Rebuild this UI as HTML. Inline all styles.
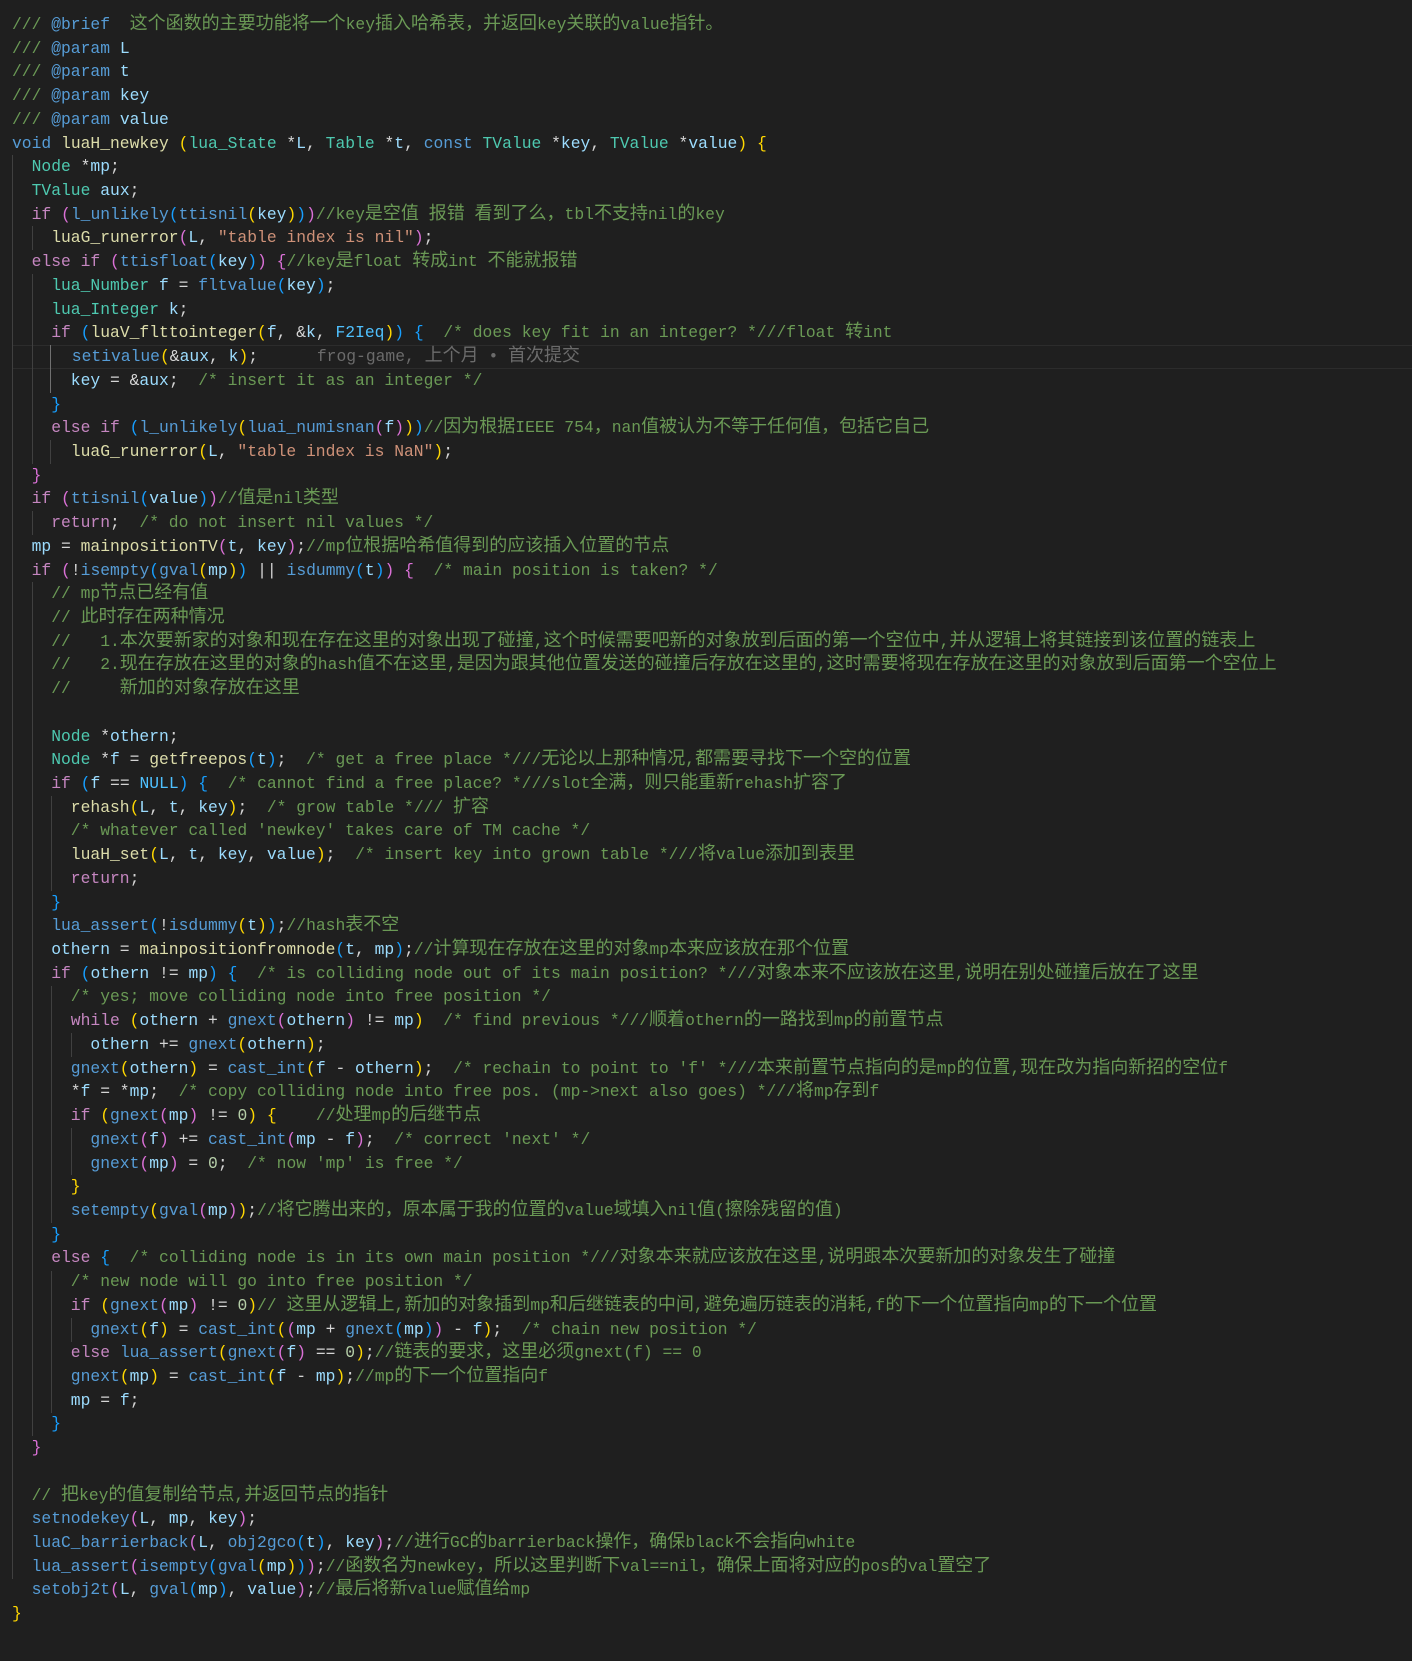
<!DOCTYPE html>
<html><head><meta charset="utf-8"><style>
html,body{margin:0;padding:0;background:#1f1f1f;width:1412px;height:1661px;overflow:hidden}
#ed{position:relative;padding-top:13px;padding-left:12px;font-family:"Liberation Mono",monospace;font-size:16.33px;color:#d4d4d4}
.l{height:23.73px;line-height:23.73px;white-space:pre;overflow:visible}
i{font-style:normal}
u{text-decoration:none;font-family:"Noto Sans CJK SC","WenQuanYi Zen Hei",sans-serif;font-size:18px;line-height:0;vertical-align:baseline}
.c{color:#6a9955}.k{color:#569cd6}.p{color:#c586c0}.f{color:#dcdcaa}.t{color:#4ec9b0}.v{color:#9cdcfe}.s{color:#ce9178}.n{color:#b5cea8}.m{color:#4fc1ff}
.g{color:#ffd700}.o{color:#da70d6}.b{color:#179fff}
.hl{border-top:1px solid #2c2c2c;border-bottom:1px solid #2c2c2c;margin-left:1px;padding-left:0;box-sizing:border-box;line-height:21.73px}
.bl{color:#6b6b6b}
.gd{position:absolute;width:1px;background:#404040}
</style></head><body><div id="ed">
<div class="gd" style="left:12px;top:155px;height:1424px"></div>
<div class="gd" style="left:32px;top:226px;height:24px"></div>
<div class="gd" style="left:32px;top:274px;height:190px"></div>
<div class="gd" style="left:32px;top:511px;height:24px"></div>
<div class="gd" style="left:32px;top:582px;height:854px"></div>
<div class="gd" style="left:50px;top:345px;height:48px;background:#707070"></div>
<div class="gd" style="left:50px;top:440px;height:24px"></div>
<div class="gd" style="left:51px;top:796px;height:95px"></div>
<div class="gd" style="left:51px;top:986px;height:237px"></div>
<div class="gd" style="left:51px;top:1271px;height:142px"></div>
<div class="gd" style="left:71px;top:1033px;height:24px"></div>
<div class="gd" style="left:71px;top:1128px;height:47px"></div>
<div class="gd" style="left:71px;top:1318px;height:24px"></div>

<div class="l"><i class="c">/// </i><i class="k">@brief</i><i class="c">  <u>这个函数的主要功能将一个</u>key<u>插入哈希表，并返回</u>key<u>关联的</u>value<u>指针。</u></i></div>
<div class="l"><i class="c">/// </i><i class="k">@param</i> <i class="v">L</i></div>
<div class="l"><i class="c">/// </i><i class="k">@param</i> <i class="v">t</i></div>
<div class="l"><i class="c">/// </i><i class="k">@param</i> <i class="v">key</i></div>
<div class="l"><i class="c">/// </i><i class="k">@param</i> <i class="v">value</i></div>
<div class="l"><i class="k">void</i> <i class="f">luaH_newkey</i> <i class="g">(</i><i class="t">lua_State</i> *<i class="v">L</i>, <i class="t">Table</i> *<i class="v">t</i>, <i class="k">const</i> <i class="t">TValue</i> *<i class="v">key</i>, <i class="t">TValue</i> *<i class="v">value</i><i class="g">)</i> <i class="g">{</i></div>
<div class="l">  <i class="t">Node</i> *<i class="v">mp</i>;</div>
<div class="l">  <i class="t">TValue</i> <i class="v">aux</i>;</div>
<div class="l">  <i class="p">if</i> <i class="o">(</i><i class="k">l_unlikely</i><i class="b">(</i><i class="k">ttisnil</i><i class="g">(</i><i class="v">key</i><i class="g">)</i><i class="b">)</i><i class="o">)</i><i class="c">//key<u>是空值</u> <u>报错</u> <u>看到了么，</u>tbl<u>不支持</u>nil<u>的</u>key</i></div>
<div class="l">    <i class="f">luaG_runerror</i><i class="o">(</i><i class="v">L</i>, <i class="s">"table index is nil"</i><i class="o">)</i>;</div>
<div class="l">  <i class="p">else if</i> <i class="o">(</i><i class="k">ttisfloat</i><i class="b">(</i><i class="v">key</i><i class="b">)</i><i class="o">)</i> <i class="o">{</i><i class="c">//key<u>是</u>float <u>转成</u>int <u>不能就报错</u></i></div>
<div class="l">    <i class="t">lua_Number</i> <i class="v">f</i> = <i class="k">fltvalue</i><i class="b">(</i><i class="v">key</i><i class="b">)</i>;</div>
<div class="l">    <i class="t">lua_Integer</i> <i class="v">k</i>;</div>
<div class="l">    <i class="p">if</i> <i class="b">(</i><i class="f">luaV_flttointeger</i><i class="g">(</i><i class="v">f</i>, &amp;<i class="v">k</i>, <i class="m">F2Ieq</i><i class="g">)</i><i class="b">)</i> <i class="b">{</i>  <i class="c">/* does key fit in an integer? *///float <u>转</u>int</i></div>
<div class="l hl">      <i class="k">setivalue</i><i class="g">(</i>&amp;<i class="v">aux</i>, <i class="v">k</i><i class="g">)</i>;      <i class="bl">frog-game, <u>上个月</u> • <u>首次提交</u></i></div>
<div class="l">      <i class="v">key</i> = &amp;<i class="v">aux</i>;  <i class="c">/* insert it as an integer */</i></div>
<div class="l">    <i class="b">}</i></div>
<div class="l">    <i class="p">else if</i> <i class="b">(</i><i class="k">l_unlikely</i><i class="g">(</i><i class="k">luai_numisnan</i><i class="o">(</i><i class="v">f</i><i class="o">)</i><i class="g">)</i><i class="b">)</i><i class="c">//<u>因为根据</u>IEEE 754<u>，</u>nan<u>值被认为不等于任何值，包括它自己</u></i></div>
<div class="l">      <i class="f">luaG_runerror</i><i class="g">(</i><i class="v">L</i>, <i class="s">"table index is NaN"</i><i class="g">)</i>;</div>
<div class="l">  <i class="o">}</i></div>
<div class="l">  <i class="p">if</i> <i class="o">(</i><i class="k">ttisnil</i><i class="b">(</i><i class="v">value</i><i class="b">)</i><i class="o">)</i><i class="c">//<u>值是</u>nil<u>类型</u></i></div>
<div class="l">    <i class="p">return</i>;  <i class="c">/* do not insert nil values */</i></div>
<div class="l">  <i class="v">mp</i> = <i class="f">mainpositionTV</i><i class="o">(</i><i class="v">t</i>, <i class="v">key</i><i class="o">)</i>;<i class="c">//mp<u>位根据哈希值得到的应该插入位置的节点</u></i></div>
<div class="l">  <i class="p">if</i> <i class="o">(</i>!<i class="k">isempty</i><i class="b">(</i><i class="k">gval</i><i class="g">(</i><i class="v">mp</i><i class="g">)</i><i class="b">)</i> || <i class="k">isdummy</i><i class="b">(</i><i class="v">t</i><i class="b">)</i><i class="o">)</i> <i class="o">{</i>  <i class="c">/* main position is taken? */</i></div>
<div class="l">    <i class="c">// mp<u>节点已经有值</u></i></div>
<div class="l">    <i class="c">// <u>此时存在两种情况</u></i></div>
<div class="l">    <i class="c">//   1.<u>本次要新家的对象和现在存在这里的对象出现了碰撞</u>,<u>这个时候需要吧新的对象放到后面的第一个空位中</u>,<u>并从逻辑上将其链接到该位置的链表上</u></i></div>
<div class="l">    <i class="c">//   2.<u>现在存放在这里的对象的</u>hash<u>值不在这里</u>,<u>是因为跟其他位置发送的碰撞后存放在这里的</u>,<u>这时需要将现在存放在这里的对象放到后面第一个空位上</u></i></div>
<div class="l">    <i class="c">//     <u>新加的对象存放在这里</u></i></div>
<div class="l"> </div>
<div class="l">    <i class="t">Node</i> *<i class="v">othern</i>;</div>
<div class="l">    <i class="t">Node</i> *<i class="v">f</i> = <i class="f">getfreepos</i><i class="b">(</i><i class="v">t</i><i class="b">)</i>;  <i class="c">/* get a free place *///<u>无论以上那种情况</u>,<u>都需要寻找下一个空的位置</u></i></div>
<div class="l">    <i class="p">if</i> <i class="b">(</i><i class="v">f</i> == <i class="m">NULL</i><i class="b">)</i> <i class="b">{</i>  <i class="c">/* cannot find a free place? *///slot<u>全满，则只能重新</u>rehash<u>扩容了</u></i></div>
<div class="l">      <i class="f">rehash</i><i class="g">(</i><i class="v">L</i>, <i class="v">t</i>, <i class="v">key</i><i class="g">)</i>;  <i class="c">/* grow table */// <u>扩容</u></i></div>
<div class="l">      <i class="c">/* whatever called 'newkey' takes care of TM cache */</i></div>
<div class="l">      <i class="f">luaH_set</i><i class="g">(</i><i class="v">L</i>, <i class="v">t</i>, <i class="v">key</i>, <i class="v">value</i><i class="g">)</i>;  <i class="c">/* insert key into grown table *///<u>将</u>value<u>添加到表里</u></i></div>
<div class="l">      <i class="p">return</i>;</div>
<div class="l">    <i class="b">}</i></div>
<div class="l">    <i class="k">lua_assert</i><i class="b">(</i>!<i class="k">isdummy</i><i class="g">(</i><i class="v">t</i><i class="g">)</i><i class="b">)</i>;<i class="c">//hash<u>表不空</u></i></div>
<div class="l">    <i class="v">othern</i> = <i class="f">mainpositionfromnode</i><i class="b">(</i><i class="v">t</i>, <i class="v">mp</i><i class="b">)</i>;<i class="c">//<u>计算现在存放在这里的对象</u>mp<u>本来应该放在那个位置</u></i></div>
<div class="l">    <i class="p">if</i> <i class="b">(</i><i class="v">othern</i> != <i class="v">mp</i><i class="b">)</i> <i class="b">{</i>  <i class="c">/* is colliding node out of its main position? *///<u>对象本来不应该放在这里</u>,<u>说明在别处碰撞后放在了这里</u></i></div>
<div class="l">      <i class="c">/* yes; move colliding node into free position */</i></div>
<div class="l">      <i class="p">while</i> <i class="g">(</i><i class="v">othern</i> + <i class="k">gnext</i><i class="o">(</i><i class="v">othern</i><i class="o">)</i> != <i class="v">mp</i><i class="g">)</i>  <i class="c">/* find previous *///<u>顺着</u>othern<u>的一路找到</u>mp<u>的前置节点</u></i></div>
<div class="l">        <i class="v">othern</i> += <i class="k">gnext</i><i class="g">(</i><i class="v">othern</i><i class="g">)</i>;</div>
<div class="l">      <i class="k">gnext</i><i class="g">(</i><i class="v">othern</i><i class="g">)</i> = <i class="k">cast_int</i><i class="g">(</i><i class="v">f</i> - <i class="v">othern</i><i class="g">)</i>;  <i class="c">/* rechain to point to 'f' *///<u>本来前置节点指向的是</u>mp<u>的位置</u>,<u>现在改为指向新招的空位</u>f</i></div>
<div class="l">      *<i class="v">f</i> = *<i class="v">mp</i>;  <i class="c">/* copy colliding node into free pos. (mp-&gt;next also goes) *///<u>将</u>mp<u>存到</u>f</i></div>
<div class="l">      <i class="p">if</i> <i class="g">(</i><i class="k">gnext</i><i class="o">(</i><i class="v">mp</i><i class="o">)</i> != <i class="n">0</i><i class="g">)</i> <i class="g">{</i>    <i class="c">//<u>处理</u>mp<u>的后继节点</u></i></div>
<div class="l">        <i class="k">gnext</i><i class="o">(</i><i class="v">f</i><i class="o">)</i> += <i class="k">cast_int</i><i class="o">(</i><i class="v">mp</i> - <i class="v">f</i><i class="o">)</i>;  <i class="c">/* correct 'next' */</i></div>
<div class="l">        <i class="k">gnext</i><i class="o">(</i><i class="v">mp</i><i class="o">)</i> = <i class="n">0</i>;  <i class="c">/* now 'mp' is free */</i></div>
<div class="l">      <i class="g">}</i></div>
<div class="l">      <i class="k">setempty</i><i class="g">(</i><i class="k">gval</i><i class="o">(</i><i class="v">mp</i><i class="o">)</i><i class="g">)</i>;<i class="c">//<u>将它腾出来的，原本属于我的位置的</u>value<u>域填入</u>nil<u>值</u>(<u>擦除残留的值</u>)</i></div>
<div class="l">    <i class="b">}</i></div>
<div class="l">    <i class="p">else</i> <i class="b">{</i>  <i class="c">/* colliding node is in its own main position *///<u>对象本来就应该放在这里</u>,<u>说明跟本次要新加的对象发生了碰撞</u></i></div>
<div class="l">      <i class="c">/* new node will go into free position */</i></div>
<div class="l">      <i class="p">if</i> <i class="g">(</i><i class="k">gnext</i><i class="o">(</i><i class="v">mp</i><i class="o">)</i> != <i class="n">0</i><i class="g">)</i><i class="c">// <u>这里从逻辑上</u>,<u>新加的对象插到</u>mp<u>和后继链表的中间</u>,<u>避免遍历链表的消耗</u>,f<u>的下一个位置指向</u>mp<u>的下一个位置</u></i></div>
<div class="l">        <i class="k">gnext</i><i class="g">(</i><i class="v">f</i><i class="g">)</i> = <i class="k">cast_int</i><i class="g">(</i><i class="o">(</i><i class="v">mp</i> + <i class="k">gnext</i><i class="b">(</i><i class="v">mp</i><i class="b">)</i><i class="o">)</i> - <i class="v">f</i><i class="g">)</i>;  <i class="c">/* chain new position */</i></div>
<div class="l">      <i class="p">else</i> <i class="k">lua_assert</i><i class="g">(</i><i class="k">gnext</i><i class="o">(</i><i class="v">f</i><i class="o">)</i> == <i class="n">0</i><i class="g">)</i>;<i class="c">//<u>链表的要求，这里必须</u>gnext(f) == 0</i></div>
<div class="l">      <i class="k">gnext</i><i class="g">(</i><i class="v">mp</i><i class="g">)</i> = <i class="k">cast_int</i><i class="g">(</i><i class="v">f</i> - <i class="v">mp</i><i class="g">)</i>;<i class="c">//mp<u>的下一个位置指向</u>f</i></div>
<div class="l">      <i class="v">mp</i> = <i class="v">f</i>;</div>
<div class="l">    <i class="b">}</i></div>
<div class="l">  <i class="o">}</i></div>
<div class="l"> </div>
<div class="l">  <i class="c">// <u>把</u>key<u>的值复制给节点</u>,<u>并返回节点的指针</u></i></div>
<div class="l">  <i class="k">setnodekey</i><i class="o">(</i><i class="v">L</i>, <i class="v">mp</i>, <i class="v">key</i><i class="o">)</i>;</div>
<div class="l">  <i class="k">luaC_barrierback</i><i class="o">(</i><i class="v">L</i>, <i class="k">obj2gco</i><i class="b">(</i><i class="v">t</i><i class="b">)</i>, <i class="v">key</i><i class="o">)</i>;<i class="c">//<u>进行</u>GC<u>的</u>barrierback<u>操作，确保</u>black<u>不会指向</u>white</i></div>
<div class="l">  <i class="k">lua_assert</i><i class="o">(</i><i class="k">isempty</i><i class="b">(</i><i class="k">gval</i><i class="g">(</i><i class="v">mp</i><i class="g">)</i><i class="b">)</i><i class="o">)</i>;<i class="c">//<u>函数名为</u>newkey<u>，所以这里判断下</u>val==nil<u>，确保上面将对应的</u>pos<u>的</u>val<u>置空了</u></i></div>
<div class="l">  <i class="k">setobj2t</i><i class="o">(</i><i class="v">L</i>, <i class="k">gval</i><i class="b">(</i><i class="v">mp</i><i class="b">)</i>, <i class="v">value</i><i class="o">)</i>;<i class="c">//<u>最后将新</u>value<u>赋值给</u>mp</i></div>
<div class="l"><i class="g">}</i></div>
</div></body></html>
